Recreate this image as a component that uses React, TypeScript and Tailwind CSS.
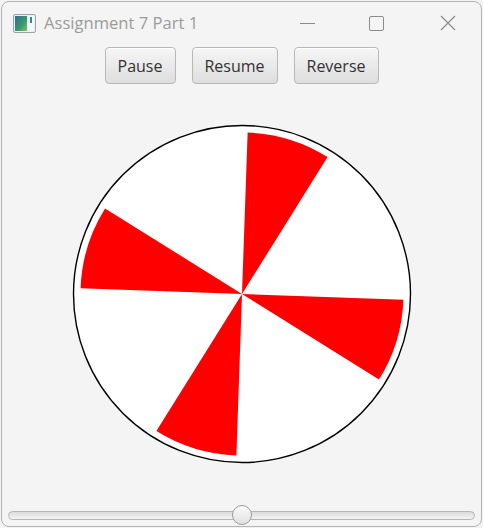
import React from "react";

const CX = 170;
const CY = 170;
const R_OUTER = 168.5;
const R_BLADE = 161.5;

// blade i spans [start, start+30] degrees, measured counter-clockwise from 3 o'clock
const bladePath = (start: number) => {
  const a0 = (start * Math.PI) / 180;
  const a1 = ((start + 30) * Math.PI) / 180;
  const x0 = CX + R_BLADE * Math.cos(a0);
  const y0 = CY - R_BLADE * Math.sin(a0);
  const x1 = CX + R_BLADE * Math.cos(a1);
  const y1 = CY - R_BLADE * Math.sin(a1);
  return `M${CX} ${CY} L${x0.toFixed(2)} ${y0.toFixed(2)} A${R_BLADE} ${R_BLADE} 0 0 0 ${x1.toFixed(2)} ${y1.toFixed(2)} Z`;
};

function WindowIcon() {
  return (
    <svg width="23" height="19" viewBox="0 0 23 19">
      <defs>
        <linearGradient id="ig" x1="0" y1="0" x2="1" y2="1">
          <stop offset="0" stopColor="#2f6f8f" />
          <stop offset="0.6" stopColor="#3a9a6a" />
          <stop offset="1" stopColor="#7fc06a" />
        </linearGradient>
      </defs>
      <rect x="0.5" y="0.5" width="22" height="18" rx="1.5" fill="#e9eef0" stroke="#9aa4aa" />
      <rect x="2" y="2" width="12" height="15" fill="url(#ig)" />
      <rect x="15.5" y="2" width="5.5" height="15" fill="#f6f8f8" />
      <rect x="17" y="3" width="2" height="6" fill="#2e8a8a" />
    </svg>
  );
}

function Btn({ label, w }: { label: string; w: string }) {
  return (
    <button
      className={`${w} h-[37px] rounded-[4px] border border-[#b8b8b8] bg-gradient-to-b from-[#f6f6f6] to-[#dedede] text-[16px] text-[#333] shadow-[inset_0_1px_0_#ffffff]`}
    >
      {label}
    </button>
  );
}

export default function App() {
  return (
    <div
      className="w-[483px] h-[528px] bg-[#f3f3f3] p-[1px]"
      style={{ fontFamily: '"Segoe UI", "Open Sans", "Noto Sans", sans-serif' }}
    >
      <div className="h-full rounded-[8px] border border-[#b3b3b3] bg-[#f4f4f4] flex flex-col overflow-hidden">
        {/* title bar */}
        <div className="h-[37px] pt-[5px] flex items-center pl-[11px] shrink-0">
          <WindowIcon />
          <span className="ml-[8px] text-[16.6px] text-[#9b9b9b]">
            Assignment 7 Part 1
          </span>
          <div className="ml-auto flex items-center h-full">
            <div className="w-[68px] flex justify-center">
              <div className="w-[15px] h-[1px] bg-[#8a8a8a]" />
            </div>
            <div className="w-[70px] flex justify-center">
              <div className="w-[15px] h-[15px] rounded-[2px] border border-[#8a8a8a]" />
            </div>
            <div className="w-[67px] ml-[3px] flex justify-center">
              <svg width="16" height="16" viewBox="0 0 16 16">
                <path d="M1 1 L15 15 M15 1 L1 15" stroke="#8a8a8a" strokeWidth="1.2" />
              </svg>
            </div>
          </div>
        </div>

        {/* buttons */}
        <div className="flex justify-center gap-[16px] pt-[8px]">
          <Btn label="Pause" w="w-[71px]" />
          <Btn label="Resume" w="w-[86px]" />
          <Btn label="Reverse" w="w-[85px]" />
        </div>

        {/* pinwheel */}
        <div className="flex justify-center pt-[40px] pl-[1px]">
          <svg width="340" height="340" viewBox="0 0 340 340">
            <circle cx={CX} cy={CY} r={R_OUTER} fill="#ffffff" stroke="#000000" strokeWidth="1.4" />
            {[58, 148, 238, 328].map((s) => (
              <path key={s} d={bladePath(s)} fill="#ff0000" />
            ))}
          </svg>
        </div>

        {/* slider */}
        <div className="mt-auto mb-[1px] px-[6px] relative h-[20px] flex items-center">
          <div className="w-full h-[9px] rounded-full border border-[#b5b5b5] bg-gradient-to-b from-[#dcdcdc] to-[#f4f4f4]" />
          <div className="absolute left-[230px] top-0 w-[20px] h-[20px] rounded-full border border-[#9a9a9a] bg-gradient-to-b from-[#fbfbfb] to-[#e0e0e0]" />
        </div>
      </div>
    </div>
  );
}
